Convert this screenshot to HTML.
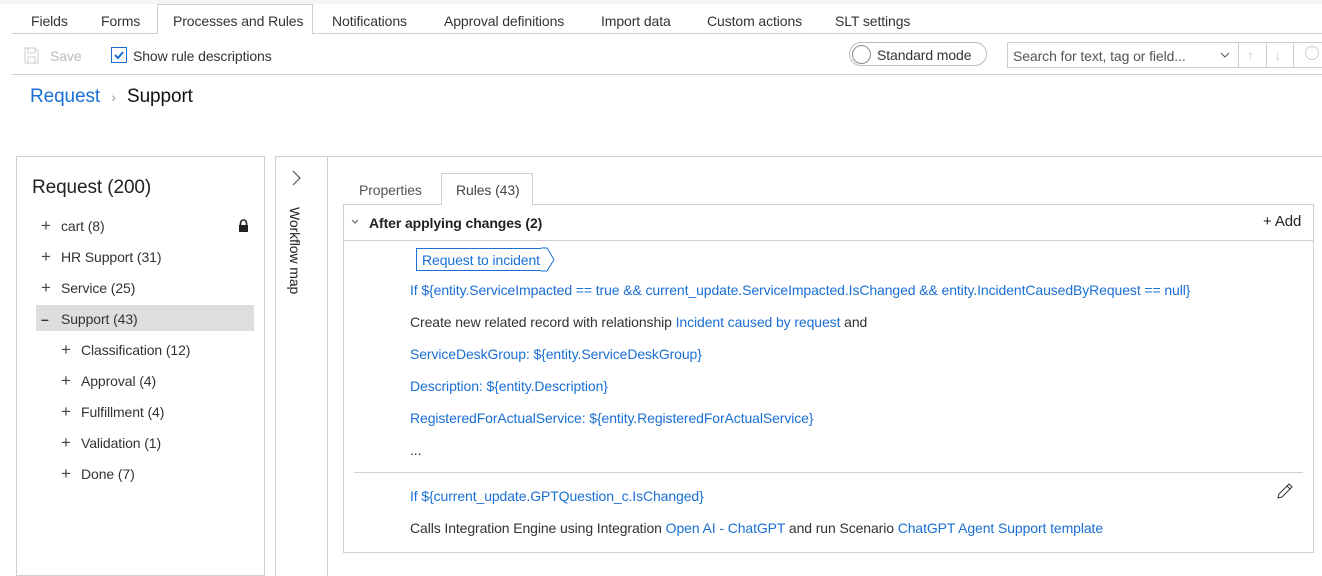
<!DOCTYPE html>
<html><head><meta charset="utf-8"><style>
*{margin:0;padding:0;box-sizing:border-box}
body{width:1322px;height:561px;overflow:hidden;background:#fff;font-family:"Liberation Sans",sans-serif;color:#333;font-size:14px;letter-spacing:-0.1px;position:relative;line-height:16px}
.a{position:absolute;white-space:nowrap}
.b{color:#1a6fd4}
.line{position:absolute;background:#cfcfcf}
.p{display:inline-block;width:20px;font-size:17px;font-weight:300;color:#444}
</style></head><body>
<div class="a" style="left:0;top:0;width:1322px;height:4px;background:#f5f5f5"></div>
<div class="line" style="left:12px;top:33px;width:1310px;height:1px"></div>
<div class="a" style="left:157px;top:4px;width:156px;height:30px;border:1px solid #cfcfcf;border-bottom:none;background:#fff"></div>
<div class="a" style="left:31px;top:13px">Fields</div>
<div class="a" style="left:101px;top:13px">Forms</div>
<div class="a" style="left:173px;top:13px">Processes and Rules</div>
<div class="a" style="left:332px;top:13px">Notifications</div>
<div class="a" style="left:444px;top:13px">Approval definitions</div>
<div class="a" style="left:601px;top:13px">Import data</div>
<div class="a" style="left:707px;top:13px">Custom actions</div>
<div class="a" style="left:835px;top:13px">SLT settings</div>

<svg class="a" style="left:23px;top:47px" width="17" height="17"><path d="M2 1h10l3 3v12H2z M5 1v5h7V1 M5 10h7v6H5z" fill="none" stroke="#ccc"/></svg>
<div class="a" style="left:50px;top:48px;color:#bbb">Save</div>
<div class="a" style="left:111px;top:47px;width:16px;height:16px;border:1px solid #1a6fd4"></div>
<svg class="a" style="left:111px;top:47px" width="16" height="16"><path d="M4 8l3 3 5-6" fill="none" stroke="#1a6fd4" stroke-width="2"/></svg>
<div class="a" style="left:133px;top:48px">Show rule descriptions</div>
<div class="a" style="left:849px;top:42px;width:138px;height:24px;border:1px solid #bbb;border-radius:12px"></div>
<div class="a" style="left:852px;top:45px;width:19px;height:19px;border:1px solid #888;border-radius:50%"></div>
<div class="a" style="left:877px;top:47px">Standard mode</div>
<div class="a" style="left:1007px;top:42px;width:320px;height:26px;border:1px solid #ccc"></div>
<div class="a" style="left:1013px;top:48px;color:#555">Search for text, tag or field...</div>
<svg class="a" style="left:1220px;top:51px" width="10" height="8"><path d="M1 2l4 4 4-4" fill="none" stroke="#555"/></svg>
<div class="line" style="left:1238px;top:42px;width:1px;height:26px"></div>
<div class="line" style="left:1266px;top:42px;width:1px;height:26px"></div>
<div class="line" style="left:1293px;top:42px;width:1px;height:26px"></div>
<div class="a" style="left:1247px;top:47px;color:#ccc">↑</div>
<div class="a" style="left:1274px;top:47px;color:#ccc">↓</div>
<div class="a" style="left:1305px;top:46px;width:14px;height:14px;border:1px solid #ccc;border-radius:50%"></div>
<div class="line" style="left:12px;top:74px;width:1310px;height:1px"></div>

<div class="a" style="left:30px;top:87px;font-size:19px;line-height:20px"><span class="b">Request</span> <span style="color:#999;font-size:14px;margin:0 6px">›</span> <span style="color:#111">Support</span></div>

<div class="a" style="left:16px;top:156px;width:249px;height:420px;border:1px solid #cfcfcf"></div>
<div class="a" style="left:32px;top:178px;font-size:19px;line-height:20px;color:#222">Request (200)</div>
<div class="a" style="left:36px;top:305px;width:218px;height:26px;background:#dedede"></div>
<div class="a" style="left:41px;top:218px"><span class="p">+</span>cart (8)</div>
<div class="a" style="left:41px;top:249px"><span class="p">+</span>HR Support (31)</div>
<div class="a" style="left:41px;top:280px"><span class="p">+</span>Service (25)</div>
<div class="a" style="left:41px;top:311px"><b style="display:inline-block;width:20px">–</b>Support (43)</div>
<svg class="a" style="left:238px;top:219px" width="11" height="14"><path d="M2.5 6V4a3 3 0 0 1 6 0v2" fill="none" stroke="#222" stroke-width="1.6"/><rect x="1" y="6" width="9" height="7" fill="#222"/></svg>
<div class="a" style="left:61px;top:342px"><span class="p">+</span>Classification (12)</div>
<div class="a" style="left:61px;top:373px"><span class="p">+</span>Approval (4)</div>
<div class="a" style="left:61px;top:404px"><span class="p">+</span>Fulfillment (4)</div>
<div class="a" style="left:61px;top:435px"><span class="p">+</span>Validation (1)</div>
<div class="a" style="left:61px;top:466px"><span class="p">+</span>Done (7)</div>

<div class="a" style="left:275px;top:156px;width:53px;height:420px;border-left:1px solid #cfcfcf;border-top:1px solid #cfcfcf;border-right:1px solid #cfcfcf"></div>
<svg class="a" style="left:291px;top:170px" width="10" height="16"><path d="M2 1l7 7-7 7" fill="none" stroke="#444"/></svg>
<div class="a" style="left:303px;top:207px;transform-origin:0 0;transform:rotate(90deg);color:#222">Workflow map</div>

<div class="line" style="left:328px;top:156px;width:994px;height:1px"></div>
<div class="a" style="left:359px;top:182px;color:#555">Properties</div>
<div class="a" style="left:441px;top:173px;width:92px;height:32px;border:1px solid #cfcfcf;border-bottom:none;background:#fff;z-index:2"></div>
<div class="a" style="left:456px;top:182px;color:#444;z-index:3">Rules (43)</div>
<div class="a" style="left:343px;top:204px;width:971px;height:349px;border:1px solid #cfcfcf"></div>
<div class="line" style="left:344px;top:240px;width:969px;height:1px"></div>
<svg class="a" style="left:351px;top:219px" width="8" height="6"><path d="M1 1l3 3 3-3" fill="none" stroke="#555"/></svg>
<div class="a" style="left:369px;top:215px;font-weight:bold;color:#222">After applying changes (2)</div>
<div class="a" style="left:1263px;top:214px;font-size:15px;color:#222">+ Add</div>

<div class="a" style="left:416px;top:248px;width:131px;height:23px;border:1px solid #1a6fd4;border-right:none"></div>
<svg class="a" style="left:540px;top:247px" width="16" height="25"><path d="M1 1h6l7 11.5-7 11.5H1" fill="#fff" stroke="#1a6fd4"/></svg>
<div class="a b" style="left:422px;top:252px">Request to incident</div>
<div class="a b" style="left:410px;top:282px">If ${entity.ServiceImpacted == true &amp;&amp; current_update.ServiceImpacted.IsChanged &amp;&amp; entity.IncidentCausedByRequest == null}</div>
<div class="a" style="left:410px;top:314px">Create new related record with relationship <span class="b">Incident caused by request</span> and</div>
<div class="a b" style="left:410px;top:346px">ServiceDeskGroup: ${entity.ServiceDeskGroup}</div>
<div class="a b" style="left:410px;top:378px">Description: ${entity.Description}</div>
<div class="a b" style="left:410px;top:410px">RegisteredForActualService: ${entity.RegisteredForActualService}</div>
<div class="a" style="left:410px;top:442px">...</div>
<div class="line" style="left:354px;top:472px;width:949px;height:1px"></div>
<div class="a b" style="left:410px;top:488px">If ${current_update.GPTQuestion_c.IsChanged}</div>
<svg class="a" style="left:1276px;top:482px" width="18" height="18"><path d="M2 16l1-4 10-10 3 3-10 10z M11 4l3 3" fill="none" stroke="#333"/></svg>
<div class="a" style="left:410px;top:520px">Calls Integration Engine using Integration <span class="b">Open AI - ChatGPT</span> and run Scenario <span class="b">ChatGPT Agent Support template</span></div>
</body></html>
